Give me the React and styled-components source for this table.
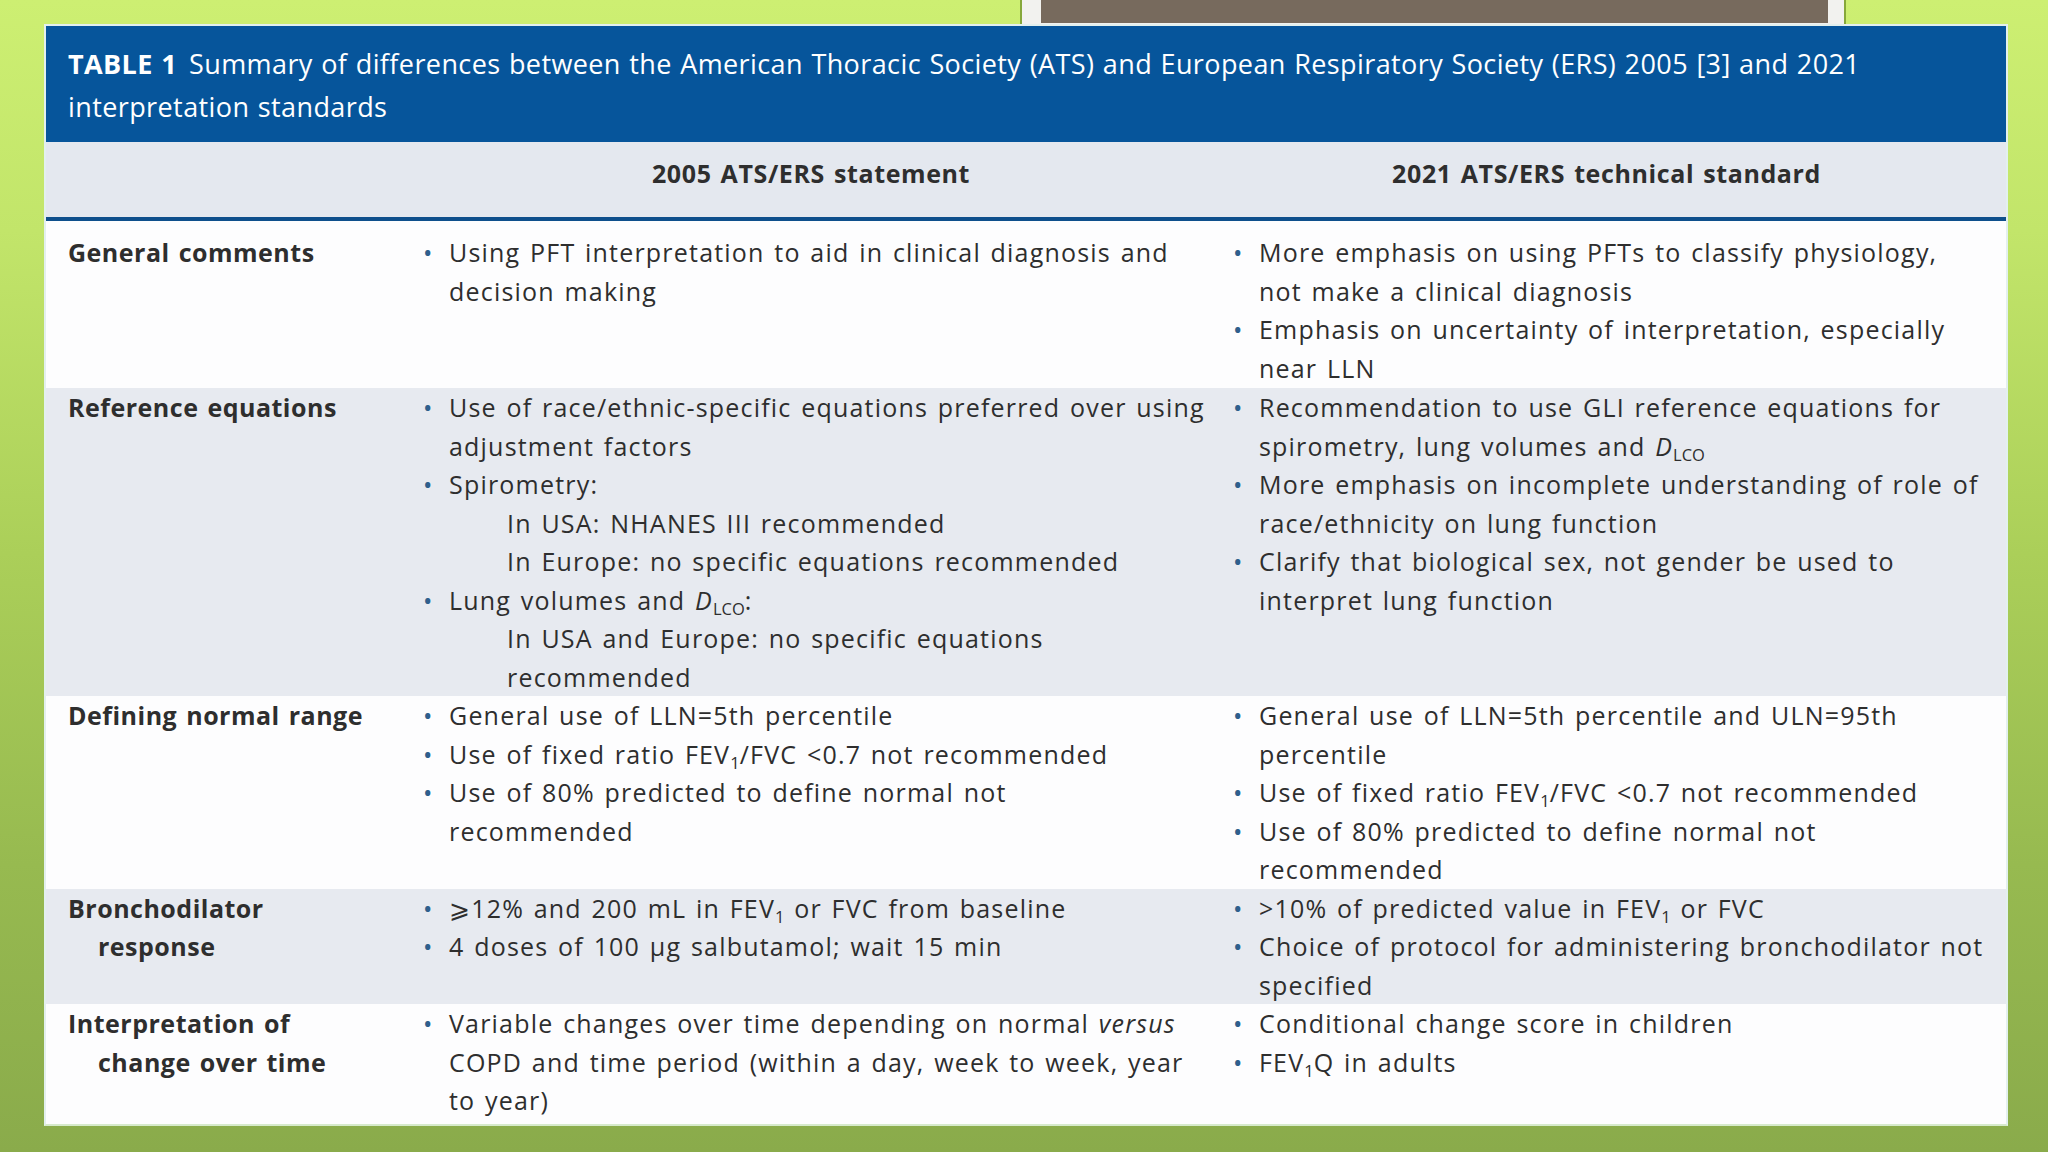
import React from 'react'
import styled, { createGlobalStyle } from 'styled-components'

const GlobalStyle = createGlobalStyle`
  html, body {
    margin: 0;
    padding: 0;
  }
  body {
    font-family: "Open Sans", "Noto Sans", sans-serif;
  }
`

const Slide = styled.div`
  width: 2048px;
  height: 1152px;
  box-sizing: border-box;
  padding: 0 40px 0 44px;
  overflow: hidden;
  display: flex;
  flex-direction: column;
  background: linear-gradient(180deg, #cdef72 0%, #c2e56a 20%, #abcf59 48%, #97ba50 75%, #8aab4b 100%);
`

const TopStrip = styled.div`
  height: 24px;
  display: flex;
  padding-left: 976px;
`

const Frame = styled.div`
  width: 826px;
  box-sizing: border-box;
  display: flex;
  padding: 0 16px 1px 19px;
  background: #f2f2ef;
  border-left: 2px solid #86a83b;
  border-right: 2px solid #86a83b;
`

const FramePhoto = styled.div`
  flex: 1;
  background: #776a5d;
`

const Table = styled.div`
  border: 2px solid #e3f0ee;
  border-bottom-color: #d6eacb;
  background: #fdfdfe;
  color: #2e2e2e;
  font-size: 25px;
  letter-spacing: 1.2px;
  word-spacing: 2px;
`

const Caption = styled.div`
  background: #06559b;
  color: #ffffff;
  padding: 16px 24px 14px 22px;
  font-size: 27px;
  line-height: 43px;
  letter-spacing: 0.4px;
  word-spacing: 1px;
`

const CaptionLabel = styled.b`
  font-weight: 700;
  margin-right: 12px;
`

const HeadRow = styled.div`
  display: grid;
  grid-template-columns: 369px 810px 1fr;
  height: 79px;
  box-sizing: border-box;
  background: #e4e8ef;
  border-bottom: 4px solid #0e4f8c;
`

const HeadCell = styled.div`
  padding: 12px 18px 0 0;
  text-align: center;
  font-weight: 700;
  line-height: 38px;
  letter-spacing: 0.6px;
`

const Row = styled.div`
  display: grid;
  grid-template-columns: 369px 810px 1fr;
  line-height: 38.5px;
  background: ${p => (p.$shade ? '#e7eaf0' : '#fdfdfe')};
  padding: ${p => p.$pad || '0'};
`

const Label = styled.div`
  padding-left: 22px;
  font-weight: 700;
  letter-spacing: 0.5px;
`

const LabelLine = styled.div`
  padding-left: ${p => (p.$indent ? '30px' : '0')};
`

const Cell = styled.div`
  padding-left: 8px;
`

const Item = styled.div`
  display: flex;
  white-space: nowrap;
`

const Dot = styled.span`
  flex: none;
  width: 26px;
  color: #2f5f8c;
`

const Lines = styled.div`
  display: flex;
  flex-direction: column;
`

const SubLine = styled.div`
  padding-left: 58px;
`

const Subscript = styled.sub`
  font-size: 0.66em;
  line-height: 0;
  vertical-align: -0.3em;
  letter-spacing: 0;
`

const Ital = styled.i`
  font-style: italic;
`

const Fev = () => <>FEV<Subscript>1</Subscript></>
const Dlco = () => <><Ital>D</Ital><Subscript>LCO</Subscript></>

const Bullet = ({ children }) => (
  <Item>
    <Dot>•</Dot>
    <Lines>{children}</Lines>
  </Item>
)

const rows = [
  {
    label: [['General comments']],
    pad: '12px 0 1px',
    old: [
      <Bullet key="a">
        <div>Using PFT interpretation to aid in clinical diagnosis and</div>
        <div>decision making</div>
      </Bullet>
    ],
    now: [
      <Bullet key="a">
        <div>More emphasis on using PFTs to classify physiology,</div>
        <div>not make a clinical diagnosis</div>
      </Bullet>,
      <Bullet key="b">
        <div>Emphasis on uncertainty of interpretation, especially</div>
        <div>near LLN</div>
      </Bullet>
    ]
  },
  {
    label: [['Reference equations']],
    shade: true,
    old: [
      <Bullet key="a">
        <div>Use of race/ethnic-specific equations preferred over using</div>
        <div>adjustment factors</div>
      </Bullet>,
      <Bullet key="b">
        <div>Spirometry:</div>
        <SubLine>In USA: NHANES III recommended</SubLine>
        <SubLine>In Europe: no specific equations recommended</SubLine>
      </Bullet>,
      <Bullet key="c">
        <div>Lung volumes and <Dlco />:</div>
        <SubLine>In USA and Europe: no specific equations</SubLine>
        <SubLine>recommended</SubLine>
      </Bullet>
    ],
    now: [
      <Bullet key="a">
        <div>Recommendation to use GLI reference equations for</div>
        <div>spirometry, lung volumes and <Dlco /></div>
      </Bullet>,
      <Bullet key="b">
        <div>More emphasis on incomplete understanding of role of</div>
        <div>race/ethnicity on lung function</div>
      </Bullet>,
      <Bullet key="c">
        <div>Clarify that biological sex, not gender be used to</div>
        <div>interpret lung function</div>
      </Bullet>
    ]
  },
  {
    label: [['Defining normal range']],
    old: [
      <Bullet key="a"><div>General use of LLN=5th percentile</div></Bullet>,
      <Bullet key="b"><div>Use of fixed ratio <Fev />/FVC &lt;0.7 not recommended</div></Bullet>,
      <Bullet key="c">
        <div>Use of 80% predicted to define normal not</div>
        <div>recommended</div>
      </Bullet>
    ],
    now: [
      <Bullet key="a">
        <div>General use of LLN=5th percentile and ULN=95th</div>
        <div>percentile</div>
      </Bullet>,
      <Bullet key="b"><div>Use of fixed ratio <Fev />/FVC &lt;0.7 not recommended</div></Bullet>,
      <Bullet key="c">
        <div>Use of 80% predicted to define normal not</div>
        <div>recommended</div>
      </Bullet>
    ]
  },
  {
    label: [['Bronchodilator'], ['response', true]],
    shade: true,
    old: [
      <Bullet key="a"><div>⩾12% and 200 mL in <Fev /> or FVC from baseline</div></Bullet>,
      <Bullet key="b"><div>4 doses of 100 µg salbutamol; wait 15 min</div></Bullet>
    ],
    now: [
      <Bullet key="a"><div>&gt;10% of predicted value in <Fev /> or FVC</div></Bullet>,
      <Bullet key="b">
        <div>Choice of protocol for administering bronchodilator not</div>
        <div>specified</div>
      </Bullet>
    ]
  },
  {
    label: [['Interpretation of'], ['change over time', true]],
    pad: '0 0 4px',
    old: [
      <Bullet key="a">
        <div>Variable changes over time depending on normal <Ital>versus</Ital></div>
        <div>COPD and time period (within a day, week to week, year</div>
        <div>to year)</div>
      </Bullet>
    ],
    now: [
      <Bullet key="a"><div>Conditional change score in children</div></Bullet>,
      <Bullet key="b"><div><Fev />Q in adults</div></Bullet>
    ]
  }
]

export default function App() {
  return (
    <Slide>
      <GlobalStyle />
      <TopStrip>
        <Frame>
          <FramePhoto />
        </Frame>
      </TopStrip>

      <Table>
        <Caption>
          <CaptionLabel>TABLE 1</CaptionLabel>
          Summary of differences between the American Thoracic Society (ATS) and European Respiratory Society (ERS) 2005 [3] and 2021
          <br />
          interpretation standards
        </Caption>

        <HeadRow>
          <div />
          <HeadCell>2005 ATS/ERS statement</HeadCell>
          <HeadCell>2021 ATS/ERS technical standard</HeadCell>
        </HeadRow>

        {rows.map((row, i) => (
          <Row key={i} $shade={row.shade} $pad={row.pad}>
            <Label>
              {row.label.map(([text, indent]) => (
                <LabelLine key={text} $indent={indent}>{text}</LabelLine>
              ))}
            </Label>
            <Cell>{row.old}</Cell>
            <Cell>{row.now}</Cell>
          </Row>
        ))}
      </Table>
    </Slide>
  )
}
